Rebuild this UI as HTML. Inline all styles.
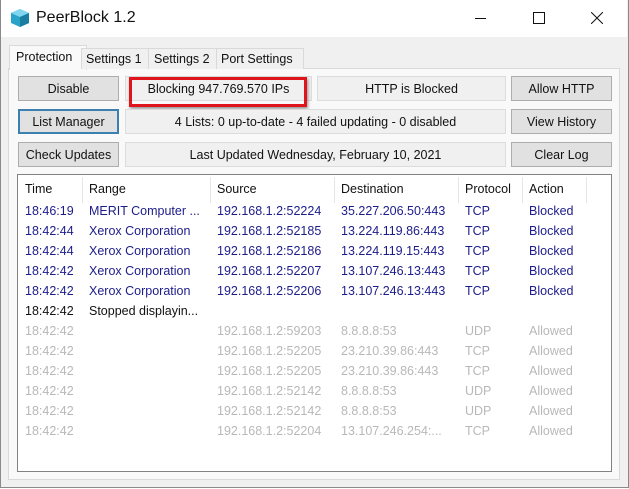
<html><head><style>
body{margin:0;width:629px;height:489px;background:#fff;font-family:"Liberation Sans",sans-serif;font-size:12.5px;color:#111;position:relative;overflow:hidden}
.a{position:absolute}
.win{left:0;top:0;width:627px;height:487px;border:1px solid #8a8a8a;border-top:none;background:#f0f0f0}
.btn{position:absolute;background:#e1e1e1;border:1px solid #adadad;text-align:center;line-height:25px;height:23px;box-sizing:content-box}
.box{position:absolute;background:#f0f0f0;border:1px solid #dcdcdc;text-align:center;line-height:25px;height:23px}
.row{position:absolute;left:0;height:20px;line-height:22px;white-space:nowrap}
.row span{position:absolute}
.b{color:#1c1c8a}.g{color:#b8b8b8}
</style></head><body>
<div class="a win"></div>
<div class="a" style="left:1px;top:0;width:626px;height:37px;background:#fff"></div>
<svg class="a" style="left:10px;top:8px" width="20" height="20" viewBox="0 0 20 20"><polygon points="10,1 19,5 19,15 10,19 1,15 1,5" fill="#2aa3c9"/><polygon points="10,1 19,5 10,9 1,5" fill="#7fd6ee"/><polygon points="10,9 19,5 19,15 10,19" fill="#1a7ea3"/></svg>
<div class="a" style="left:36px;top:9px;font-size:16px">PeerBlock 1.2</div>
<div class="a" style="left:475px;top:18px;width:11px;height:1px;background:#111"></div>
<div class="a" style="left:533px;top:12px;width:10px;height:10px;border:1px solid #111"></div>
<svg class="a" style="left:591px;top:12px" width="12" height="12"><path d="M0 0L12 12M12 0L0 12" stroke="#111" stroke-width="1"/></svg>
<div class="a" style="left:8px;top:68px;width:610px;height:410px;border:1px solid #d9d9d9;background:#f9f9f9"></div>
<div class="a" style="left:9px;top:45px;width:70px;height:24px;background:#f9f9f9;border:1px solid #d9d9d9;border-bottom:none;line-height:22px;padding-left:6px">Protection</div>
<div class="a" style="left:81px;top:48px;width:65px;height:20px;background:#f0f0f0;border:1px solid #d9d9d9;border-bottom:none;line-height:21px;padding-left:4px">Settings 1</div>
<div class="a" style="left:148px;top:48px;width:65px;height:20px;background:#f0f0f0;border:1px solid #d9d9d9;border-bottom:none;line-height:21px;padding-left:5px">Settings 2</div>
<div class="a" style="left:216px;top:48px;width:82px;height:20px;background:#f0f0f0;border:1px solid #d9d9d9;border-bottom:none;line-height:21px;padding-left:4px">Port Settings</div>
<div class="btn" style="left:18px;top:76px;width:99px">Disable</div>
<div class="btn" style="left:18px;top:109px;width:97px;border:2px solid #3c7fb1;height:21px;line-height:23px">List Manager</div>
<div class="btn" style="left:18px;top:142px;width:99px">Check Updates</div>
<div class="box" style="left:125px;top:76px;width:185px">Blocking 947.769.570 IPs</div>
<div class="a" style="left:129px;top:77px;width:172px;height:24px;border:3px solid #e0141b;box-shadow:1px 2px 3px rgba(0,0,0,.4)"></div>
<div class="box" style="left:317px;top:76px;width:187px">HTTP is Blocked</div>
<div class="box" style="left:125px;top:109px;width:379px">4 Lists: 0 up-to-date - 4 failed updating - 0 disabled</div>
<div class="box" style="left:125px;top:142px;width:379px">Last Updated Wednesday, February 10, 2021</div>
<div class="btn" style="left:511px;top:76px;width:99px">Allow HTTP</div>
<div class="btn" style="left:511px;top:109px;width:99px">View History</div>
<div class="btn" style="left:511px;top:142px;width:99px">Clear Log</div>
<div class="a" style="left:17px;top:174px;width:593px;height:296px;border:1px solid #828282;background:#fff;overflow:hidden">
<div class="a" style="left:64px;top:2px;width:1px;height:26px;background:#e5e5e5"></div>
<div class="a" style="left:192px;top:2px;width:1px;height:26px;background:#e5e5e5"></div>
<div class="a" style="left:316px;top:2px;width:1px;height:26px;background:#e5e5e5"></div>
<div class="a" style="left:440px;top:2px;width:1px;height:26px;background:#e5e5e5"></div>
<div class="a" style="left:504px;top:2px;width:1px;height:26px;background:#e5e5e5"></div>
<div class="a" style="left:568px;top:2px;width:1px;height:26px;background:#e5e5e5"></div>
<div class="row" style="top:3px"><span style="left:7px">Time</span><span style="left:71px">Range</span><span style="left:199px">Source</span><span style="left:323px">Destination</span><span style="left:447px">Protocol</span><span style="left:511px">Action</span></div>
<div class="row b" style="top:25px"><span style="left:7px">18:46:19</span><span style="left:71px">MERIT Computer ...</span><span style="left:199px">192.168.1.2:52224</span><span style="left:323px">35.227.206.50:443</span><span style="left:447px">TCP</span><span style="left:511px">Blocked</span></div>
<div class="row b" style="top:45px"><span style="left:7px">18:42:44</span><span style="left:71px">Xerox Corporation</span><span style="left:199px">192.168.1.2:52185</span><span style="left:323px">13.224.119.86:443</span><span style="left:447px">TCP</span><span style="left:511px">Blocked</span></div>
<div class="row b" style="top:65px"><span style="left:7px">18:42:44</span><span style="left:71px">Xerox Corporation</span><span style="left:199px">192.168.1.2:52186</span><span style="left:323px">13.224.119.15:443</span><span style="left:447px">TCP</span><span style="left:511px">Blocked</span></div>
<div class="row b" style="top:85px"><span style="left:7px">18:42:42</span><span style="left:71px">Xerox Corporation</span><span style="left:199px">192.168.1.2:52207</span><span style="left:323px">13.107.246.13:443</span><span style="left:447px">TCP</span><span style="left:511px">Blocked</span></div>
<div class="row b" style="top:105px"><span style="left:7px">18:42:42</span><span style="left:71px">Xerox Corporation</span><span style="left:199px">192.168.1.2:52206</span><span style="left:323px">13.107.246.13:443</span><span style="left:447px">TCP</span><span style="left:511px">Blocked</span></div>
<div class="row" style="top:125px"><span style="left:7px">18:42:42</span><span style="left:71px">Stopped displayin...</span></div>
<div class="row g" style="top:145px"><span style="left:7px">18:42:42</span><span style="left:199px">192.168.1.2:59203</span><span style="left:323px">8.8.8.8:53</span><span style="left:447px">UDP</span><span style="left:511px">Allowed</span></div>
<div class="row g" style="top:165px"><span style="left:7px">18:42:42</span><span style="left:199px">192.168.1.2:52205</span><span style="left:323px">23.210.39.86:443</span><span style="left:447px">TCP</span><span style="left:511px">Allowed</span></div>
<div class="row g" style="top:185px"><span style="left:7px">18:42:42</span><span style="left:199px">192.168.1.2:52205</span><span style="left:323px">23.210.39.86:443</span><span style="left:447px">TCP</span><span style="left:511px">Allowed</span></div>
<div class="row g" style="top:205px"><span style="left:7px">18:42:42</span><span style="left:199px">192.168.1.2:52142</span><span style="left:323px">8.8.8.8:53</span><span style="left:447px">UDP</span><span style="left:511px">Allowed</span></div>
<div class="row g" style="top:225px"><span style="left:7px">18:42:42</span><span style="left:199px">192.168.1.2:52142</span><span style="left:323px">8.8.8.8:53</span><span style="left:447px">UDP</span><span style="left:511px">Allowed</span></div>
<div class="row g" style="top:245px"><span style="left:7px">18:42:42</span><span style="left:199px">192.168.1.2:52204</span><span style="left:323px">13.107.246.254:...</span><span style="left:447px">TCP</span><span style="left:511px">Allowed</span></div>
</div>
</body></html>
